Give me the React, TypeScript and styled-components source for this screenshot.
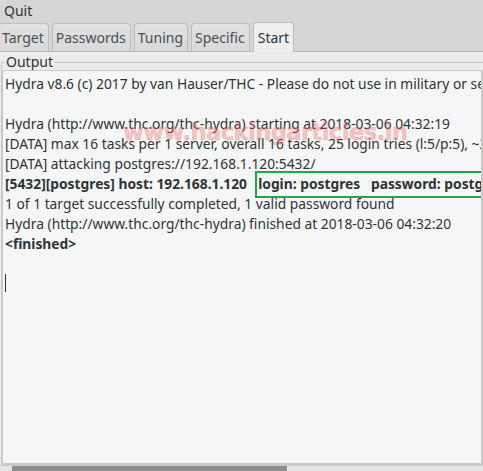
import React from "react";
import styled, { createGlobalStyle } from "styled-components";

const GlobalStyle = createGlobalStyle`
  html, body {
    margin: 0;
    padding: 0;
    background: #d6d6d6;
  }
  body {
    font-family: "Noto Sans", "DejaVu Sans", sans-serif;
    color: #2e3436;
  }
`;

const Window = styled.div`
  width: 483px;
  height: 471px;
  background: #d6d6d6;
  display: flex;
  flex-direction: column;
  overflow: hidden;
  font-size: 13.8px;
`;

const MenuBar = styled.div`
  height: 21px;
  display: flex;
  align-items: center;
  padding-left: 4px;
  font-size: 14px;
`;

const TabBar = styled.div`
  height: 30px;
  display: flex;
  align-items: flex-end;
  gap: 3px;
  border-bottom: 1px solid #b4b4b4;
`;

const Tab = styled.div<{ active?: boolean }>`
  height: ${(p) => (p.active ? "30px" : "28px")};
  padding: 0 4px 0 ${(p) => (p.active ? "4px" : "3px")};
  display: flex;
  align-items: center;
  box-sizing: border-box;
  font-size: 14px;
  color: ${(p) => (p.active ? "#2e3436" : "#4a4f51")};
  background: ${(p) => (p.active ? "#efefef" : "linear-gradient(#e2e2e2, #d9d9d9)")};
  border: 1px solid #bdbdbd;
  border-bottom: none;
  border-radius: 4px 4px 0 0;
  margin-bottom: ${(p) => (p.active ? "-1px" : "0")};
  &:first-child {
    margin-left: -2px;
  }
`;

const Page = styled.div`
  flex: 1;
  background: #ececec;
  display: flex;
  flex-direction: column;
  min-height: 0;
`;

const Frame = styled.fieldset`
  flex: 1;
  margin: 2px 0 0 1px;
  padding: 0;
  border: 1px solid #c9c9c9;
  border-right: none;
  display: flex;
  flex-direction: column;
  min-height: 0;
  min-width: 0;
`;

const Legend = styled.legend`
  padding: 0 1px;
  margin-left: 3px;
  font-size: 14px;
  line-height: 16px;
`;

const TextView = styled.div`
  position: relative;
  flex: 1;
  background: #f6f6f6;
  border: 1px solid #cacaca;
  border-right-width: 2px;
  border-bottom-width: 2px;
  padding: 3px 0 0 2px;
  white-space: pre;
  overflow: hidden;
  line-height: 20px;
  color: #2e3436;
`;

const Line = styled.div<{ bold?: boolean }>`
  height: 20px;
  font-weight: ${(p) => (p.bold ? 700 : 400)};
`;

const Highlight = styled.span`
  margin-left: 1px;
  border: 2px solid #1fa84a;
  padding: 1px 0 3px 1px;
`;

const Cursor = styled.div`
  width: 1px;
  height: 18px;
  background: #2e3436;
`;

const Watermark = styled.div`
  position: absolute;
  left: 120px;
  top: 51px;
  font-family: "DejaVu Sans", sans-serif;
  font-weight: 700;
  font-size: 22.5px;
  letter-spacing: -0.5px;
  color: rgba(240, 100, 100, 0.36);
  -webkit-text-stroke: 0.6px rgba(230, 80, 80, 0.28);
  pointer-events: none;
`;

const ScrollTrack = styled.div`
  height: 5px;
  background: #e6e6e6;
  display: flex;
`;

const ScrollThumb = styled.div`
  margin-left: 12px;
  width: 275px;
  background: #8f8f8f;
`;

const tabs = ["Target", "Passwords", "Tuning", "Specific", "Start"];

export default function App() {
  return (
    <Window>
      <GlobalStyle />
      <MenuBar>Quit</MenuBar>
      <TabBar>
        {tabs.map((t) => (
          <Tab key={t} active={t === "Start"}>
            {t}
          </Tab>
        ))}
      </TabBar>
      <Page>
        <Frame>
          <Legend>Output</Legend>
          <TextView>
            <Line>Hydra v8.6 (c) 2017 by van Hauser/THC - Please do not use in military or secret service organizations, or for illegal purposes.</Line>
            <Line />
            <Line>Hydra (http://www.thc.org/thc-hydra) starting at 2018-03-06 04:32:19</Line>
            <Line>[DATA] max 16 tasks per 1 server, overall 16 tasks, 25 login tries (l:5/p:5), ~2 tries per task</Line>
            <Line>[DATA] attacking postgres://192.168.1.120:5432/</Line>
            <Line bold>
              [5432][postgres] host: 192.168.1.120  <Highlight>login: postgres   password: postgres</Highlight>
            </Line>
            <Line>1 of 1 target successfully completed, 1 valid password found</Line>
            <Line>Hydra (http://www.thc.org/thc-hydra) finished at 2018-03-06 04:32:20</Line>
            <Line bold>{"<finished>"}</Line>
            <Line />
            <Cursor />
            <Watermark>www.hackingarticles.in</Watermark>
          </TextView>
        </Frame>
        <ScrollTrack>
          <ScrollThumb />
        </ScrollTrack>
      </Page>
    </Window>
  );
}
